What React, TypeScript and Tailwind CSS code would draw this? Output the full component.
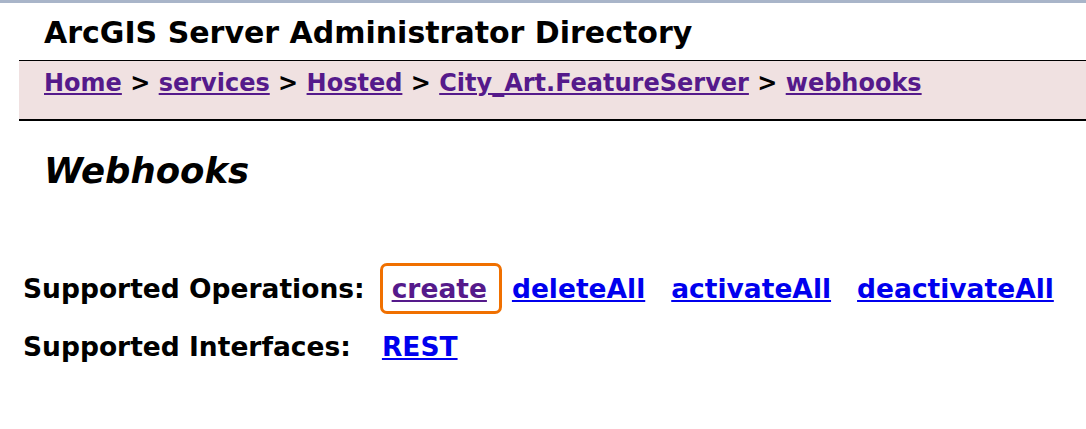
const FONT = { fontFamily: '"DejaVu Sans", Verdana, sans-serif' };

const crumbs = ['Home', 'services', 'Hosted', 'City_Art.FeatureServer', 'webhooks'];

const ops = ['deleteAll', 'activateAll', 'deactivateAll'];

export default function App() {
  return (
    <div className="w-[1086px] h-[429px] bg-white overflow-hidden text-black" style={FONT}>
      <div className="h-[3px] bg-[#a9b5c9]" />

      <div className="pl-[44px] pt-[13px] pb-[10px] text-[30px] font-bold leading-[34px]">
        ArcGIS Server Administrator Directory
      </div>

      <div className="ml-[19px] border-t border-b-2 border-black bg-[#f0e1e1] h-[61px] pl-[25px] pt-[7px] text-[24px] font-bold leading-[30px]">
        {crumbs.map((c, i) => (
          <span key={c}>
            {i > 0 && <span> &gt; </span>}
            <a href="#" className="text-[#551a8b] underline">{c}</a>
          </span>
        ))}
      </div>

      <h2 className="pl-[44px] pt-[30px] text-[35.5px] font-bold italic leading-[40px]">Webhooks</h2>

      <div className="pl-[23px] pt-[72px] text-[26.5px] font-bold">
        <div className="flex items-center h-[51px]">
          <span>Supported Operations:</span>
          <span className="ml-[15px] border-[3px] border-[#f07000] rounded-[7px] h-[51px] pl-[9px] pr-[12px] flex items-center">
            <a href="#" className="text-[#551a8b] underline">create</a>
          </span>
          <div className="flex gap-[26px] ml-[10px]">
            {ops.map((o) => (
              <a key={o} href="#" className="text-[#0000ee] underline">{o}</a>
            ))}
          </div>
        </div>
        <div className="flex items-center mt-[13px]">
          <span>Supported Interfaces:</span>
          <a href="#" className="ml-[31px] text-[#0000ee] underline">REST</a>
        </div>
      </div>
    </div>
  );
}
